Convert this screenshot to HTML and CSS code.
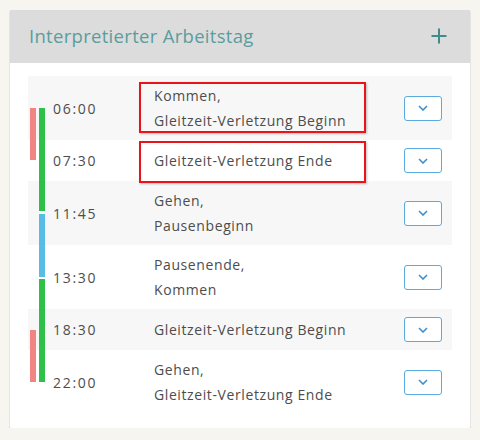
FILE: index.html
```html
<!DOCTYPE html>
<html lang="de">
<head>
<meta charset="utf-8">
<title>Interpretierter Arbeitstag</title>
<link rel="stylesheet" href="styles.css">
</head>
<body>
<div class="card">
  <div class="card-header">
    <h2 class="card-title">Interpretierter Arbeitstag</h2>
    <svg class="add-icon" width="16" height="16" viewBox="0 0 16 16" aria-hidden="true">
      <path d="M8 0.5V15.5M0.5 8H15.5" stroke="currentColor" stroke-width="2" fill="none"/>
    </svg>
  </div>
  <div class="card-body">
    <div class="timeline">
      <div class="bars" aria-hidden="true">
        <span class="bar bar-red" style="top:32px;height:52px"></span>
        <span class="bar bar-red" style="top:254px;height:52px"></span>
        <span class="bar bar-green" style="top:32px;height:103px"></span>
        <span class="bar bar-blue" style="top:138px;height:63px"></span>
        <span class="bar bar-green" style="top:203px;height:103px"></span>
      </div>
      <div class="row row-alt row-tall">
        <div class="time">06:00</div>
        <div class="desc marked marked-1">Kommen,<br>Gleitzeit-Verletzung Beginn</div>
        <div class="action"><button class="toggle" type="button"><svg width="10" height="6" viewBox="0 0 10 6"><path d="M1 1l4 4 4-4" stroke="currentColor" stroke-width="1.6" fill="none"/></svg></button></div>
      </div>
      <div class="row row-short">
        <div class="time">07:30</div>
        <div class="desc marked marked-2">Gleitzeit-Verletzung Ende</div>
        <div class="action"><button class="toggle" type="button"><svg width="10" height="6" viewBox="0 0 10 6"><path d="M1 1l4 4 4-4" stroke="currentColor" stroke-width="1.6" fill="none"/></svg></button></div>
      </div>
      <div class="row row-alt row-tall">
        <div class="time">11:45</div>
        <div class="desc">Gehen,<br>Pausenbeginn</div>
        <div class="action"><button class="toggle" type="button"><svg width="10" height="6" viewBox="0 0 10 6"><path d="M1 1l4 4 4-4" stroke="currentColor" stroke-width="1.6" fill="none"/></svg></button></div>
      </div>
      <div class="row row-tall">
        <div class="time">13:30</div>
        <div class="desc">Pausenende,<br>Kommen</div>
        <div class="action"><button class="toggle" type="button"><svg width="10" height="6" viewBox="0 0 10 6"><path d="M1 1l4 4 4-4" stroke="currentColor" stroke-width="1.6" fill="none"/></svg></button></div>
      </div>
      <div class="row row-alt row-short">
        <div class="time">18:30</div>
        <div class="desc">Gleitzeit-Verletzung Beginn</div>
        <div class="action"><button class="toggle" type="button"><svg width="10" height="6" viewBox="0 0 10 6"><path d="M1 1l4 4 4-4" stroke="currentColor" stroke-width="1.6" fill="none"/></svg></button></div>
      </div>
      <div class="row row-tall">
        <div class="time">22:00</div>
        <div class="desc">Gehen,<br>Gleitzeit-Verletzung Ende</div>
        <div class="action"><button class="toggle" type="button"><svg width="10" height="6" viewBox="0 0 10 6"><path d="M1 1l4 4 4-4" stroke="currentColor" stroke-width="1.6" fill="none"/></svg></button></div>
      </div>
    </div>
  </div>
</div>
</body>
</html>
```
FILE: styles.css
```css
*, *::before, *::after { box-sizing: border-box; }

html, body {
  margin: 0;
  padding: 0;
  background: #f7f5f0;
}

body {
  padding: 10px 9px 0 9px;
  font-family: "Open Sans", "Noto Sans", sans-serif;
  color: #4d4d4d;
}

.card {
  width: 462px;
  background: #ffffff;
  border-left: 1px solid #e6e4e0;
  border-right: 1px solid #e6e4e0;
  border-radius: 2px;
  box-shadow: 0 3px 0 #dcdad6;
}

.card-header {
  height: 53px;
  background: #dcdcdc;
  display: flex;
  align-items: center;
  justify-content: space-between;
  padding: 0 23px 0 19px;
}

.card-title {
  margin: 0 0 2px 0;
  font-weight: 400;
  font-size: 18.5px;
  color: #5b9c9e;
  letter-spacing: 0.3px;
}

.add-icon {
  color: #3f8c8c;
  margin-top: -1px;
}

.card-body {
  padding: 13px 18px 14px 18px;
}

.timeline {
  position: relative;
}

.bars {
  position: absolute;
  left: 0;
  top: 0;
  width: 20px;
  height: 100%;
  z-index: 2;
}

.bar {
  position: absolute;
  width: 6px;
}
.bar-red { left: 2px; background: #f08583; }
.bar-green { left: 11px; background: #2fc04a; }
.bar-blue { left: 11px; background: #57bde6; }

.row {
  display: grid;
  grid-template-columns: 111px 1fr 58px;
  align-items: center;
  font-size: 14px;
}
.row-alt { background: #f7f7f7; }
.row-tall { height: 64px; }
.row-short { height: 41px; }

.time {
  padding-left: 25px;
  letter-spacing: 1.7px;
}

.desc {
  position: relative;
  padding-left: 15px;
  line-height: 25px;
  white-space: nowrap;
  letter-spacing: 0.6px;
}

.marked::after {
  content: "";
  position: absolute;
  left: 0;
  width: 227px;
  border: 2px solid #e8141a;
  box-shadow: 1px 1px 2px rgba(0,0,0,0.25);
}
.marked-1::after { top: -1px; height: 51px; }
.marked-2::after { top: -7px; height: 42px; }

.action {
  display: flex;
  justify-content: flex-end;
  padding-right: 10px;
}

.toggle {
  width: 38px;
  height: 25px;
  border: 1px solid #5aaade;
  border-radius: 3px;
  background: #ffffff;
  color: #3d8fcf;
  padding: 0;
  display: flex;
  align-items: center;
  justify-content: center;
}
.toggle svg { display: block; }
```
